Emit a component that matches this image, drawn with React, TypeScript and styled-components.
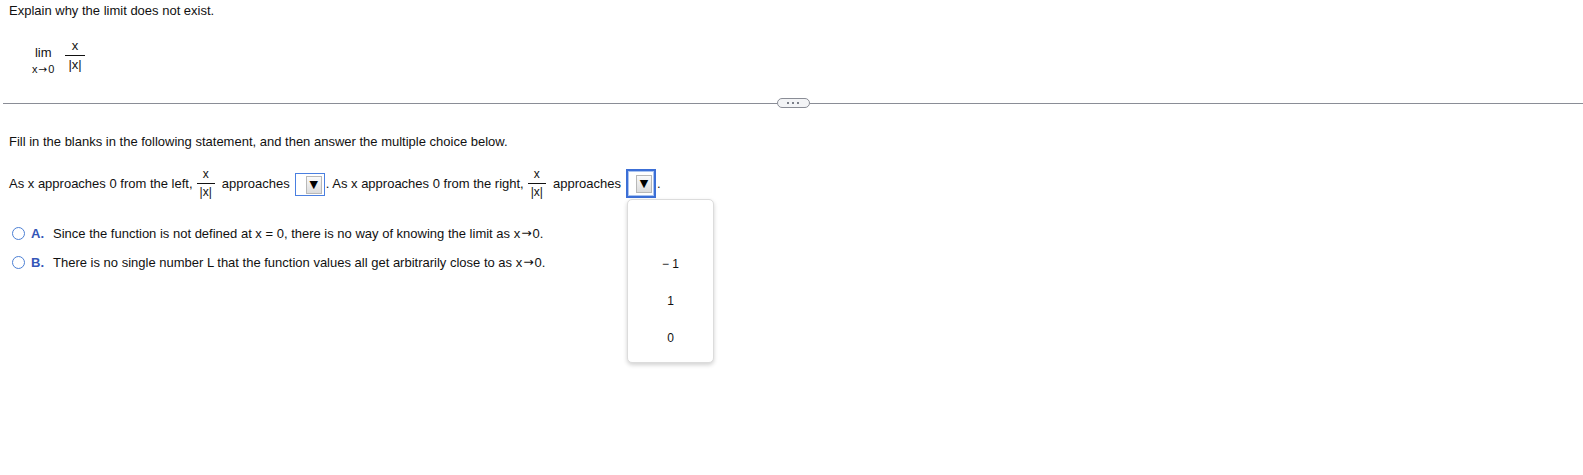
import React from "react";
import styled, { createGlobalStyle } from "styled-components";

const Global = createGlobalStyle`
  html, body { margin: 0; padding: 0; background: #fff; }
  body { font-family: "Liberation Sans", Arial, sans-serif; font-size: 13px; color: #111; }
`;

const Page = styled.div`
  position: relative;
  width: 1583px;
  height: 475px;
  overflow: hidden;
`;

const Header = styled.div`
  padding: 3px 9px 0 9px;
  display: flex;
  flex-direction: column;
`;

const Line = styled.div`
  font-size: 13px;
  line-height: 15px;
`;

const LimitRow = styled.div`
  display: flex;
  align-items: center;
  gap: 7px;
  padding: 17px 0 0 23px;
  height: 40px;
`;

const LimBlock = styled.div`
  display: flex;
  flex-direction: column;
  align-items: center;
  padding-top: 10px;
`;

const LimWord = styled.span`
  font-size: 13px;
  line-height: 14px;
`;

const LimSub = styled.span`
  font-size: 11px;
  line-height: 12px;
  margin-top: 3px;
  white-space: nowrap;
`;

const Arrow = styled.span`
  font-family: "DejaVu Sans", sans-serif;
  font-size: 0.95em;
  margin: 0 1px;
`;

const Frac = styled.span<{ $small?: boolean }>`
  display: inline-flex;
  flex-direction: column;
  align-items: center;
  vertical-align: middle;
  margin: ${(p) => (p.$small ? "0 7px 0 4px" : "0 4px")};
  font-size: ${(p) => (p.$small ? "12px" : "13px")};
  line-height: ${(p) => (p.$small ? "13px" : "14px")};
`;

const Num = styled.span`
  padding: 0 2px 2px 2px;
`;

const Den = styled.span`
  border-top: 1px solid #111;
  padding: 2px 3px 0 3px;
  align-self: stretch;
  text-align: center;
`;

const DividerRow = styled.div`
  display: flex;
  align-items: center;
  margin: 22px 0 0 3px;
  height: 12px;
`;

const Rule = styled.div`
  flex: 1;
  height: 1px;
  background: #8a8d96;
`;

const Pill = styled.div`
  width: 31px;
  height: 8px;
  border: 1px solid #8a8d96;
  border-radius: 5px;
  background: #f3f4f6;
  display: flex;
  align-items: center;
  justify-content: center;
  gap: 3px;
`;

const Dot = styled.span`
  width: 2px;
  height: 2px;
  background: #555a66;
  border-radius: 1px;
`;

const Body = styled.div`
  padding: 25px 9px 0 9px;
  display: flex;
  flex-direction: column;
`;

const Statement = styled.div`
  display: flex;
  align-items: center;
  margin-top: 19px;
  font-size: 13px;
  white-space: pre;
`;

const Select = styled.span<{ $focused?: boolean }>`
  display: inline-flex;
  align-items: center;
  justify-content: flex-end;
  box-sizing: border-box;
  width: 30px;
  height: ${(p) => (p.$focused ? "29px" : "23px")};
  margin: ${(p) => (p.$focused ? "0 1px 0 5px" : "2px 1px 0 5px")};
  border: ${(p) => (p.$focused ? "2px solid #3c6fd6" : "1px solid #4a7fe0")};
  box-shadow: ${(p) => (p.$focused ? "inset 0 0 0 1px #a9c3f0" : "none")};
  background: #fff;
  padding-right: 2px;
`;

const SelectBtn = styled.span`
  width: 16px;
  height: 18px;
  box-sizing: border-box;
  border: 1px solid #b8b8b8;
  background: linear-gradient(#fafafa, #dcdcdc);
  display: flex;
  align-items: center;
  justify-content: center;
  font-family: "DejaVu Sans", sans-serif;
  font-size: 11px;
  color: #000;
`;

const Options = styled.div`
  display: flex;
  flex-direction: column;
  gap: 15px;
  margin-top: 27px;
  padding-left: 3px;
`;

const Option = styled.div`
  display: flex;
  align-items: center;
  height: 14px;
  white-space: pre;
`;

const Radio = styled.span`
  width: 11px;
  height: 11px;
  border: 1px solid #4c7fd4;
  border-radius: 50%;
  box-sizing: content-box;
`;

const Letter = styled.span`
  color: #3456b8;
  font-weight: bold;
  width: 22px;
  margin-left: 6px;
`;

const Menu = styled.div`
  position: absolute;
  left: 627px;
  top: 199px;
  width: 87px;
  height: 164px;
  box-sizing: border-box;
  border: 1px solid #dcdcdc;
  border-radius: 5px;
  background: #fff;
  box-shadow: 0 2px 4px rgba(0, 0, 0, 0.18);
  display: flex;
  flex-direction: column;
  align-items: center;
  padding-top: 57px;
  gap: 23px;
`;

const MenuItem = styled.div`
  font-size: 12px;
  line-height: 14px;
`;

export default function App() {
  return (
    <Page>
      <Global />
      <Header>
        <Line>Explain why the limit does not exist.</Line>
        <LimitRow>
          <LimBlock>
            <LimWord>lim</LimWord>
            <LimSub>
              x<Arrow>→</Arrow>0
            </LimSub>
          </LimBlock>
          <Frac>
            <Num>x</Num>
            <Den>|x|</Den>
          </Frac>
        </LimitRow>
      </Header>
      <DividerRow>
        <Rule />
        <Pill>
          <Dot />
          <Dot />
          <Dot />
        </Pill>
        <Rule />
      </DividerRow>
      <Body>
        <Line>Fill in the blanks in the following statement, and then answer the multiple choice below.</Line>
        <Statement>
          As x approaches 0 from the left,
          <Frac $small>
            <Num>x</Num>
            <Den>|x|</Den>
          </Frac>
          approaches
          <Select>
            <SelectBtn>▼</SelectBtn>
          </Select>
          . As x approaches 0 from the right,
          <Frac $small>
            <Num>x</Num>
            <Den>|x|</Den>
          </Frac>
          approaches
          <Select $focused>
            <SelectBtn>▼</SelectBtn>
          </Select>
          .
        </Statement>
        <Options>
          <Option>
            <Radio />
            <Letter>A.</Letter>
            Since the function is not defined at x = 0, there is no way of knowing the limit as x<Arrow>→</Arrow>0.
          </Option>
          <Option>
            <Radio />
            <Letter>B.</Letter>
            There is no single number L that the function values all get arbitrarily close to as x<Arrow>→</Arrow>0.
          </Option>
        </Options>
      </Body>
      <Menu>
        <MenuItem>− 1</MenuItem>
        <MenuItem>1</MenuItem>
        <MenuItem>0</MenuItem>
      </Menu>
    </Page>
  );
}
